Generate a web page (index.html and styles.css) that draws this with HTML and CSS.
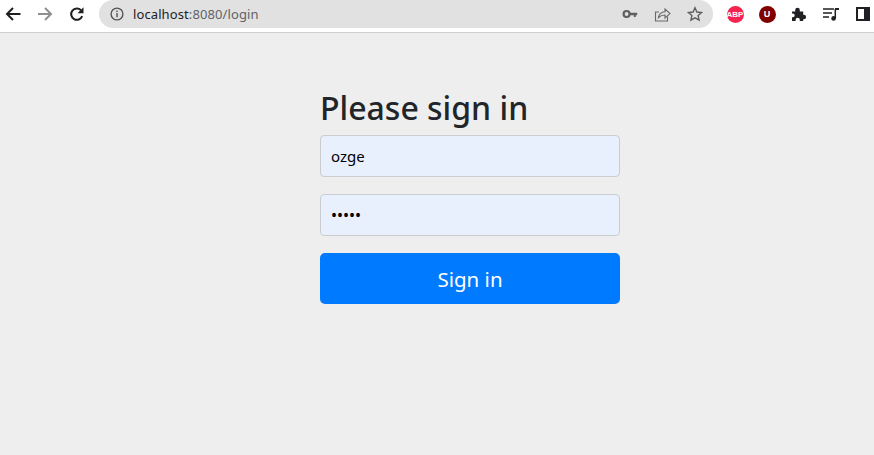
FILE: index.html
```html
<!DOCTYPE html>
<html>
<head>
	<meta charset="utf-8" />
	<title>Please sign in</title>
	<link rel="stylesheet" href="styles.css">
</head>
<body>
<div class="toolbar">
	<div class="nav-btns">
		<svg class="ic back" width="16" height="16" viewBox="0 0 16 16"><path d="M15.500 8H2.500M8 2 2 8l6 6" fill="none" stroke="#1f1f1f" stroke-width="2"/></svg>
		<svg class="ic forward" width="16" height="16" viewBox="0 0 16 16"><path d="M1 8h12.500M8 2l6 6-6 6" fill="none" stroke="#8f8f8f" stroke-width="2"/></svg>
		<svg class="ic reload" width="16" height="16" viewBox="0 0 16 16"><path d="M13.200 10.200A5.700 5.700 0 1 1 12 4.200" fill="none" stroke="#1f1f1f" stroke-width="2"/><path d="M14.500 1.200v6h-6z" fill="#1f1f1f"/></svg>
	</div>
	<div class="omnibox">
		<svg class="info" width="14" height="14" viewBox="0 0 14 14"><circle cx="7" cy="7" r="5.900" fill="none" stroke="#555" stroke-width="1.400"/><path d="M7 6v4.200M7 3.600V5" stroke="#555" stroke-width="1.400"/></svg>
		<span class="url"><span class="host">localhost</span>:8080/login</span>
		<div class="omni-icons">
			<svg width="16" height="16" viewBox="0 0 16 16"><circle cx="4.600" cy="8" r="3" fill="none" stroke="#5f5f5f" stroke-width="2.200"/><path d="M7 6.800h8.200v2.400h-1.400V11h-2V9.200H7z" fill="#5f5f5f"/></svg>
			<svg width="17" height="17" viewBox="0 0 17 17"><path d="M13.500 10.500V15h-12V6H5" fill="none" stroke="#6a6a6a" stroke-width="1.100"/><path d="M4.500 11.500c.6-3.600 3-5.600 6.500-5.700V3l5 4.600-5 4.400V9c-2.700 0-4.800.7-6.500 2.500z" fill="none" stroke="#6a6a6a" stroke-width="1.100"/></svg>
			<svg width="16" height="16" viewBox="0 0 16 16"><path d="m8 1.700 1.900 4.300 4.700.5-3.500 3.100 1 4.600L8 11.900l-4.100 2.300 1-4.600-3.500-3.100 4.700-.5z" fill="none" stroke="#5f5f5f" stroke-width="1.400"/></svg>
		</div>
	</div>
	<div class="extensions">
		<span class="slot"><span class="ext abp">ABP</span></span>
		<span class="slot"><span class="ext ublock">U</span></span>
		<span class="slot"><svg width="16" height="16" viewBox="0 0 16 16"><path d="M1 5.500h3.200V4a2.300 2.300 0 0 1 4.600 0v1.500h3.400v3.200h.6a2.300 2.300 0 0 1 0 4.600h-.6V15H8.800v-1.200a2.100 2.100 0 0 0-4.200 0V15H1v-3.800h.8a1.900 1.900 0 0 0 0-3.800H1z" fill="#202124"/></svg></span>
		<span class="slot"><svg width="17" height="16" viewBox="0 0 17 16"><path d="M0 3h11M0 7h9M0 11h6" stroke="#202124" stroke-width="1.500"/><path d="M12.300 3v9" stroke="#202124" stroke-width="1.500"/><path d="M12 2h4v2h-4z" fill="#202124"/><circle cx="10.600" cy="12.400" r="2.300" fill="#202124"/></svg></span>
		<span class="slot"><svg width="14" height="14" viewBox="0 0 14 14"><path d="M1 1h12v12H1z" fill="none" stroke="#202124" stroke-width="2"/><path d="M8 1h5v12H8z" fill="#202124"/></svg></span>
	</div>
</div>
<div class="page">
	<form class="form-signin" onsubmit="return false">
		<h2>Please sign in</h2>
		<input class="form-control username" type="text" value="ozge">
		<input class="form-control" type="password" value="12345">
		<button class="btn" type="submit">Sign in</button>
	</form>
</div>
</body>
</html>
```

FILE: styles.css
```css
* {
	margin: 0;
	padding: 0;
	box-sizing: border-box;
}
html, body {
	height: 100%;
}
body {
	display: flex;
	flex-direction: column;
	background: #eeeeee;
	font-family: "Noto Sans", sans-serif;
	overflow: hidden;
}
.toolbar {
	display: flex;
	height: 33px;
	background: #fff;
	border-bottom: 1px solid #d0d0d0;
	flex-shrink: 0;
}
.nav-btns {
	display: flex;
	flex-shrink: 0;
	gap: 16px;
	width: 99px;
	padding: 6px 0 0 5px;
}
.ic {
	display: block;
}
.omnibox {
	display: flex;
	flex-shrink: 0;
	align-items: center;
	width: 614px;
	height: 28px;
	padding: 0 10px 0 11px;
	background: #e1e1e1;
	border-radius: 14px;
	font-size: 13px;
}
.url {
	margin-left: 9px;
	color: #5f6368;
	letter-spacing: 0.1px;
}
.host {
	color: #202124;
}
.omni-icons {
	display: flex;
	align-items: center;
	gap: 16px;
	margin-left: auto;
}
.extensions {
	display: flex;
	flex-shrink: 0;
	height: 28px;
	padding-left: 6px;
}
.slot {
	display: flex;
	align-items: center;
	justify-content: center;
	width: 32px;
}
.ext {
	display: flex;
	align-items: center;
	justify-content: center;
	width: 17px;
	height: 17px;
	border-radius: 50%;
	color: #fff;
	font-family: "Liberation Sans", sans-serif;
	font-weight: bold;
}
.abp {
	background: #f4234f;
	font-size: 8px;
}
.ublock {
	background: #800000;
	font-size: 9px;
}
.page {
	flex: 1;
	padding: 54px 0 0 320px;
}
.form-signin {
	display: flex;
	flex-direction: column;
	width: 300px;
}
h2 {
	height: 48px;
	color: #212529;
	font-size: 32px;
	font-weight: 500;
	line-height: 42px;
}
.form-control {
	height: 42px;
	margin-bottom: 17px;
	padding: 0 10px;
	background: #e8f0fe;
	border: 1px solid #c9cdd2;
	border-radius: 4px;
	color: #000;
	font-family: "Noto Sans", sans-serif;
	font-size: 16px;
	outline: none;
}
.username {
	font-size: 15px;
}
.btn {
	height: 51px;
	background: #007bff;
	border: 0;
	border-radius: 5px;
	color: #fff;
	font-family: "Noto Sans", sans-serif;
	font-size: 20.500px;
}
```
